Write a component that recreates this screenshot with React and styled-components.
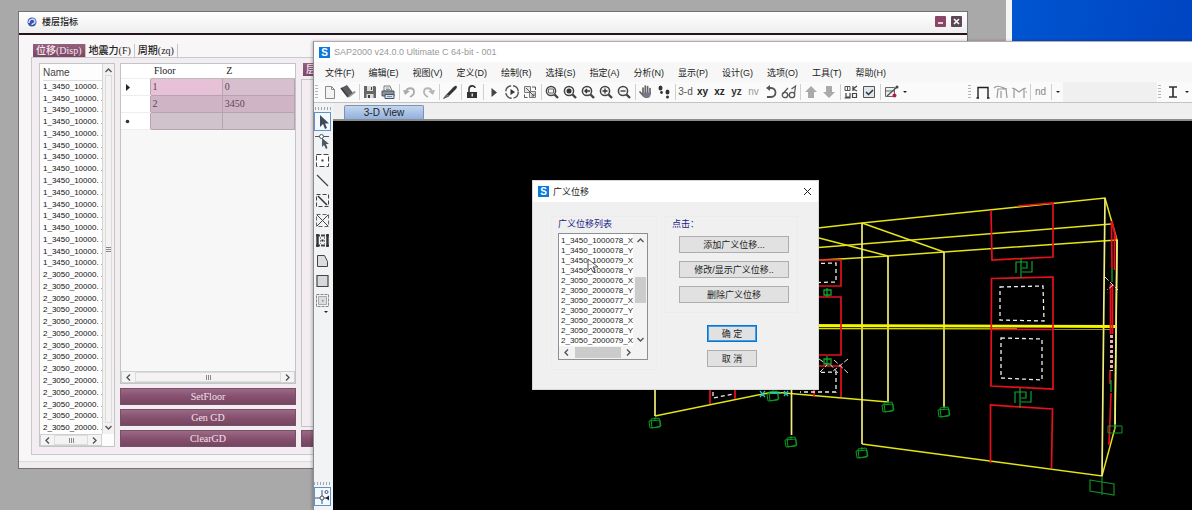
import React from 'react';
import styled, { createGlobalStyle, css } from 'styled-components';

const upperNames = Array(16).fill('1_3450_10000. .');
const lowerNames = Array(14).fill('2_3050_20000. .');
const names = [...upperNames, ...lowerNames];

const displacements = [
  '1_3450_1000078_X',
  '1_3450_1000078_Y',
  '1_3450_1000079_X',
  '1_3450_1000078_Y',
  '2_3050_2000076_X',
  '2_3050_2000078_Y',
  '2_3050_2000077_X',
  '2_3050_2000077_Y',
  '2_3050_2000078_X',
  '2_3050_2000078_Y',
  '2_3050_2000079_X',
];

const menus = [
  '文件(F)', '编辑(E)', '视图(V)', '定义(D)', '绘制(R)', '选择(S)', '指定(A)',
  '分析(N)', '显示(P)', '设计(G)', '选项(O)', '工具(T)', '帮助(H)',
];

// Toolbar groups, a separator is drawn between two groups
const mainTools = [
  ['new', 'tag'],
  ['save', 'print'],
  ['undo', 'redo'],
  ['pen'],
  ['lock'],
  ['play', 'run', 'stages'],
  ['zoomBox', 'zoomAll', 'zoomPrev', 'zoomIn', 'zoomOut'],
  ['hand', 'feet'],
  ['3-d', 'xy', 'xz', 'yz', 'nv', 'rotate', 'glasses'],
  ['up', 'down'],
  ['objects', 'check'],
  ['assign'],
];

const textTools = {
  '3-d': '#555', xy: '#222', xz: '#222', yz: '#333', nv: '#999', nd: '#888',
};

const sideTools = [
  'pointer', 'reshape', 'joint', 'frame', 'quickFrame', 'brace',
  'secondary', 'poly', 'rect', 'quickArea',
];

const glass = (inner) => (
  <>
    <circle cx="7" cy="7" r="4.6" fill="#f4f4f4" stroke="#444" strokeWidth="1.5" />
    <path d="M10.5 10.5 14 14" stroke="#444" strokeWidth="2.4" />
    {inner}
  </>
);

const icons = {
  new: <path d="M3.5 2.5h6l3 3v9h-9zM9.5 2.5v3h3" fill="#f4f4f2" stroke="#8a8a8a" />,
  tag: (
    <>
      <path d="M1 4 7 1l6 8-5 4z" fill="#5c5c60" />
      <path d="M8 14l2-1 6-5-2-1z" fill="#8f9094" />
      <path d="M1 4l7 9" stroke="#3c3c40" strokeWidth="1.6" />
    </>
  ),
  save: (
    <>
      <path d="M2 2h11l1 1v11H2z" fill="#666" />
      <path d="M5 2h6v5H5zM4.500 10h7v4h-7z" fill="#ddd" />
      <path d="M9 3h1v3H9zM6 11h2v3H6z" fill="#444" />
    </>
  ),
  print: (
    <>
      <path d="M4 7 4 2h6l2 5z" fill="#fff" stroke="#777" />
      <path d="M2 7h12v5H2z" fill="#8a9098" stroke="#556" />
      <path d="M5 10.500h9v4H5z" fill="#d4e0ee" stroke="#456" />
      <path d="M5.500 4h4M6 5.500h4M7 12.500h5" stroke="#678" strokeWidth=".8" />
    </>
  ),
  undo: (
    <>
      <path d="M4 8c1-5 8-5 8 0 0 3-2 4-4 5" fill="none" stroke="#aaa" strokeWidth="1.8" />
      <path d="M1 6l7 1-5 4z" fill="#aaa" />
    </>
  ),
  redo: (
    <>
      <path d="M12 8c-1-5-8-5-8 0 0 3 2 4 4 5" fill="none" stroke="#b5b5b5" strokeWidth="1.8" />
      <path d="M15 6l-7 1 5 4z" fill="#b5b5b5" />
    </>
  ),
  pen: (
    <>
      <path d="M14.500 2c1 1 0 2.500-1 3.500L7 12l-2.500-1.500L11 3.500c1-1 2.500-2.500 3.500-1.500z" fill="#333" />
      <path d="M4.500 10.500 1.500 14.500 7 12" fill="#777" stroke="#444" strokeWidth=".8" />
    </>
  ),
  lock: (
    <>
      <path d="M5 8V5c0-4 6-4 6-1" fill="none" stroke="#333" strokeWidth="1.6" />
      <path d="M3 8h10v6H3z" fill="#333" />
      <path d="M7.500 9.500h1.500v3H7.500z" fill="#ddd" />
    </>
  ),
  play: <path d="M5.500 4 11 8.500 5.500 13z" fill="#444" />,
  run: (
    <>
      <circle cx="8" cy="8" r="6.300" fill="none" stroke="#555" strokeWidth="1.400" strokeDasharray="8 2" />
      <path d="M6.500 5 11 8l-4.500 3z" fill="#333" />
    </>
  ),
  stages: (
    <>
      <path d="M2.500 2.500h6v6h-6zM7.500 7.500h6v6h-6z" fill="#e4e4e4" stroke="#777" />
      <path d="M4 4l8 8M9.500 12H12V9.500M10 3h3.500v3M2.500 10.500v3h3" fill="none" stroke="#555" />
    </>
  ),
  zoomBox: glass(<path d="M4.500 5h5v4h-5z" stroke="#666" fill="none" />),
  zoomAll: glass(<circle cx="7" cy="7" r="2.500" fill="#333" />),
  zoomPrev: glass(<path d="M10 7H5M7 5 5 7l2 2" stroke="#333" fill="none" strokeWidth="1.400" />),
  zoomIn: glass(<path d="M4.500 7h5M7 4.500v5" stroke="#333" strokeWidth="1.300" />),
  zoomOut: glass(<path d="M4.500 7h5" stroke="#333" strokeWidth="1.300" />),
  hand: (
    <>
      <path d="M5 10V4M7.300 9V2M9.600 9V2.500M12 10V4.500M5.500 12 2 8" stroke="#666" strokeWidth="1.700" strokeLinecap="round" />
      <path d="M4.500 8.500h8.300c0 3-1 5.500-3 5.500H7.500c-1.500 0-3-2-3-5.500z" fill="#778" />
    </>
  ),
  feet: (
    <>
      <ellipse cx="4.500" cy="4" rx="2" ry="2.600" fill="#333" />
      <circle cx="5.500" cy="8.500" r="1.400" fill="#333" />
      <ellipse cx="11.500" cy="8" rx="2" ry="2.600" fill="#333" />
      <circle cx="11.500" cy="13" r="1.500" fill="#333" />
    </>
  ),
  rotate: (
    <>
      <path d="M5 4h3c6 0 6 9 0 9H4" fill="none" stroke="#555" strokeWidth="1.800" />
      <path d="M7 1v6L3 4z" fill="#555" />
    </>
  ),
  glasses: (
    <>
      <circle cx="4" cy="11" r="2.700" fill="none" stroke="#555" strokeWidth="1.300" />
      <circle cx="11" cy="11" r="2.700" fill="none" stroke="#555" strokeWidth="1.300" />
      <path d="M1.500 10 7 4M13.500 10l1-8-4 3M6.500 11h2" fill="none" stroke="#555" strokeWidth="1.200" />
    </>
  ),
  up: <path d="M8 2l6 6h-3v6H5V8H2z" fill="#aaa" />,
  down: <path d="M8 14 2 8h3V2h6v6h3z" fill="#aaa" />,
  objects: (
    <>
      <path d="M2 2.500h5v4H2zM4.500 2v5" fill="none" stroke="#555" />
      <path d="M10 2v5M14 2l-4 3 4 2M3 9v4h4V9M9.500 9.500h4v4h-4zM1.500 14h6" fill="none" stroke="#444" strokeWidth="1.200" />
    </>
  ),
  check: (
    <>
      <path d="M2.500 2.500h11v11h-11z" fill="#dde7f0" stroke="#555" />
      <path d="M5 8l2.500 2.500L12 6" fill="none" stroke="#333" strokeWidth="1.500" />
    </>
  ),
  assign: (
    <>
      <path d="M2.500 3.500h9v9h-9zM2.500 7h9" fill="#eee" stroke="#666" />
      <path d="M4 12 14 3" stroke="#555" strokeWidth="1.300" />
      <circle cx="14" cy="3" r="1.500" fill="#445" />
      <circle cx="11.500" cy="11.500" r="2" fill="#b02040" />
    </>
  ),
  portal: <path d="M3 14V3.500h10V14M1.500 14H4M12 14h2.500" fill="none" stroke="#222" strokeWidth="1.400" />,
  portalBent: <path d="M4 14 5 5h8l1 9M1 4c4-4 8 0 13 1M8 14V7" fill="none" stroke="#999" strokeWidth="1.200" />,
  portalLoad: <path d="M3 14V4M13 14V4M1 4l3 1 4 3 4-3 3-1M14.500 8h1.500" fill="none" stroke="#999" strokeWidth="1.200" />,
  iBeam: <path d="M4 3h8M4 13h8M8 3v10" stroke="#333" strokeWidth="1.700" />,
  pointer: <path d="M5 1v12l3-3 2 5 2-1-2-4.500h4z" fill="#3f4b5a" />,
  reshape: (
    <>
      <path d="M0 3.500h14" stroke="#555" />
      <circle cx="6.500" cy="3.500" r="2" fill="#fff" stroke="#456" />
      <path d="M7 5v9l2-2 2 4 1.500-1L11 11h3z" fill="#4c5866" />
    </>
  ),
  joint: (
    <>
      <path d="M1.500 1.500h12v12h-12z" fill="#fff" stroke="#444" strokeDasharray="5 2" />
      <path d="M6.500 6.500h2v2h-2z" fill="#333" />
    </>
  ),
  frame: <path d="M2 2l11 11" stroke="#444" strokeWidth="1.300" />,
  quickFrame: (
    <>
      <path d="M1.500 1.500h12v12h-12z" fill="none" stroke="#444" strokeDasharray="4 2" />
      <path d="M3 3l9 9" stroke="#333" strokeWidth="1.500" />
    </>
  ),
  brace: (
    <>
      <path d="M1.500 1.500h12v12h-12z" fill="none" stroke="#666" strokeDasharray="4 2" />
      <path d="M2 2l11 11M13 2 2 13" stroke="#444" />
    </>
  ),
  secondary: (
    <>
      <path d="M1 2.500h13M1 12.500h13" stroke="#444" strokeWidth="2" strokeDasharray="4 1" />
      <path d="M2.500 1v13M12.500 1v13" stroke="#333" strokeWidth="2.400" />
      <path d="M5.500 4v7M9.500 4v7" stroke="#888" strokeDasharray="2 1" />
      <path d="M6.500 6.500h2v2h-2z" fill="#222" />
    </>
  ),
  poly: <path d="M2.500 2.500h7l3 6v5h-10z" fill="#ddd" stroke="#444" />,
  rect: <path d="M2 2.500h11v11H2z" fill="#d5d9dd" stroke="#444" strokeWidth="1.200" />,
  quickArea: (
    <>
      <path d="M1.500 1.500h12v12h-12z" fill="none" stroke="#888" strokeDasharray="3 1" />
      <path d="M3.500 3.500h8v8h-8z" fill="#ddd" stroke="#aaa" />
      <path d="M7 7h1.500v1.500H7z" fill="#888" />
    </>
  ),
  snap: (
    <>
      <path d="M0 9h14M7 1v14" stroke="#456" />
      <circle cx="7" cy="9" r="2" fill="#fff" stroke="#456" />
      <path d="M14 6.500v5L10.500 9z" fill="#223" />
      <circle cx="11.500" cy="3" r="1.500" fill="none" stroke="#456" />
    </>
  ),
};

const Icon = ({ name }) => (
  <svg width="16" height="16" viewBox="0 0 16 16" aria-hidden="true">{icons[name]}</svg>
);

const Tool = ({ name }) => (
  <ToolButton type="button" aria-label={name} $text={name in textTools} $color={textTools[name]}>
    {name in textTools ? name : <Icon name={name} />}
  </ToolButton>
);

const Chevron = ({ to }) => {
  const turn = { up: 0, right: 90, down: 180, left: 270 }[to];
  return (
    <svg width="9" height="9" viewBox="0 0 9 9" aria-hidden="true">
      <path d="M1.500 6 4.500 3l3 3" fill="none" stroke="#555" strokeWidth="1.400" transform={`rotate(${turn} 4.5 4.5)`} />
    </svg>
  );
};

const FloorWindow = () => (
  <FloorFrame>
    <FloorTitle>
      <svg width="10" height="10" viewBox="0 0 10 10" aria-hidden="true">
        <circle cx="5" cy="5" r="4.500" fill="#3b55a8" />
        <path d="M2 6c0-5 6-5 6-1 0 2-3 1-3 3" fill="none" stroke="#d5e2ff" strokeWidth="1.500" />
      </svg>
      <h1>楼层指标</h1>
      <CaptionButton type="button" aria-label="最小化">
        <svg width="7" height="7" viewBox="0 0 7 7"><path d="M1 5h5" stroke="#fff" strokeWidth="1.500" /></svg>
      </CaptionButton>
      <CaptionButton type="button" aria-label="关闭" $dark>
        <svg width="7" height="7" viewBox="0 0 7 7"><path d="M1 1l5 5M6 1 1 6" stroke="#fff" strokeWidth="1.500" /></svg>
      </CaptionButton>
    </FloorTitle>
    <FloorBody>
      <Tabs>
        <Tab type="button" $active>位移(Disp)</Tab>
        <Tab type="button">地震力(F)</Tab>
        <Tab type="button">周期(zq)</Tab>
      </Tabs>
      <TabPanel>
        <NamePanel>
          <NameColumn>
            <NameHeader>Name</NameHeader>
            <NameList>
              {names.map((name, i) => <li key={i}>{name}</li>)}
            </NameList>
          </NameColumn>
          <VerticalBar>
            <Chevron to="up" />
            <Thumb><Grip $vertical /></Thumb>
            <Chevron to="down" />
          </VerticalBar>
          <HorizontalBar>
            <Chevron to="left" />
            <Thumb><Grip /></Thumb>
            <Chevron to="right" />
          </HorizontalBar>
        </NamePanel>
        <FloorColumn>
          <GridPanel>
            <FloorTable>
              <thead>
                <tr><th aria-label="row" /><th>Floor</th><th>Z</th></tr>
              </thead>
              <tbody>
                <tr>
                  <th><svg width="5" height="7" viewBox="0 0 5 7"><path d="M1 0l4 3.500L1 7z" fill="#222" /></svg></th>
                  <Cell $color="#e7c1d8">1</Cell><Cell $color="#d7bfd0">0</Cell>
                </tr>
                <tr><th /><Cell $color="#cfb4c6">2</Cell><Cell $color="#cfb4c6">3450</Cell></tr>
                <tr>
                  <th><svg width="5" height="5" viewBox="0 0 5 5"><circle cx="2.500" cy="2.500" r="1.800" fill="#333" /></svg></th>
                  <Cell $color="#d1c3cc" /><Cell $color="#d1c3cc" />
                </tr>
              </tbody>
            </FloorTable>
            <HorizontalBar>
              <Chevron to="left" />
              <Thumb><Grip /></Thumb>
              <Chevron to="right" />
            </HorizontalBar>
          </GridPanel>
          <PlumButton type="button">SetFloor</PlumButton>
          <PlumButton type="button">Gen GD</PlumButton>
          <PlumButton type="button">ClearGD</PlumButton>
        </FloorColumn>
        <ResultColumn>
          <Tabs><Tab type="button" $active>层</Tab></Tabs>
          <ResultPanel />
          <PlumButton type="button" aria-label="计算" />
        </ResultColumn>
      </TabPanel>
    </FloorBody>
    <FloorStatus />
  </FloorFrame>
);

// One restraint symbol at the foot of a column
const Support = ({ x, y }) => (
  <path
    d={`M${x - 4} ${y - 4}l8-1 2 8-9 2zM${x - 6} ${y - 2}l11-1v7l-10 1zM${x} ${y - 6}v3`}
    stroke="#0a9a22"
  />
);

const Hinge = ({ x, y }) => (
  <path
    d={`M${x} ${y - 10}v20M${x - 5} ${y + 5}v-11h11v6h-5M${x + 11} ${y - 7}v11h-10`}
    stroke="#12a52c"
    strokeWidth="1.200"
  />
);

const Model = () => (
  <svg width="100%" height="100%" viewBox="333 121 859 389" preserveAspectRatio="xMinYMin meet" fill="none" role="img" aria-label="3-D View">
    <g stroke="#e4e416" strokeWidth="1.500">
      <path d="M800 230 862 223 1105 198 1117 240 1115 428 1102 476 862 444" />
      <path d="M800 249 1111 224M800 261l40-2 48-3 56-4 173-12" />
      <path d="M800 233l88 23M862 223l82 29" />
      <path d="M655 416l118-24 115 10" />
    </g>
    <g stroke="#eeee7c" strokeWidth="1.700">
      <path d="M862 223v221M888 256v146M944 252v156M1105 198l-3 278M655 380v36M791.500 380v55" />
      <path d="M1117 240l-2 188" />
    </g>
    <path d="M800 325.500l315 1" stroke="#f6f600" strokeWidth="2.800" />
    <path d="M800 328.500l310 .5" stroke="#d8d800" strokeWidth="1.400" />
    <g stroke="#e8101c" strokeWidth="1.700">
      <path d="M1018 206l35-3v54l-61 3-1-50" />
      <path d="M991.500 278.500 1053 277v112l-62-3zM991 329.500h62" />
      <path d="M990.500 463v-58l62 4-1 59" />
      <path d="M800 260h41v26h-41M800 297h41v58h-41M800 366h41v31M814 366v31M710 380v24M735 380v19" />
      <path d="M1111.500 221l.5 47M1112 221l4 18M1114.500 232v38M1110.500 284v50M1112.500 284v50M1110 370v14M1111 393l-2 52" />
    </g>
    <g stroke="#eee" strokeWidth="1.300" strokeDasharray="4 3">
      <path d="M1000 287l43-1 1 35-44-1zM1001 338l41 1v41l-41-2z" />
      <path d="M800 264l36-1v19l-36 1M800 373l36-1v20h-36M713 385v13l20-4" />
    </g>
    <path d="M1111.500 335v36" stroke="#f0b0b0" strokeWidth="3" strokeDasharray="3 2" />
    <path d="M1105 277l13 13M1113 285l-6 5M834 360l14 13M848 359l-16 13M820 372l9-9 9 10M819 359l9 6" stroke="#ddd" strokeDasharray="5 2" />
    <Support x={655} y={423} />
    <Support x={791} y={442} />
    <Support x={773} y={396} />
    <Support x={888} y={407} />
    <Support x={944} y={412} />
    <Support x={862} y={453} />
    <path d="M1108 426h14v7h-14zM1115 424v6" stroke="#0a9a22" />
    <Hinge x={1021} y={268} />
    <Hinge x={1020} y={398} />
    <path d="M827 288v9M824 290h7v5h-7zM827 356v9M824 359h7v5h-7zM1112 268v14M1111 380v12" stroke="#12a52c" strokeWidth="1.300" />
    <path d="M1090 480l24 4v11l-24-4zM1102 477v18" stroke="#0f8e24" strokeWidth="1.200" />
    <path d="M760 391l5 6M765 391l-5 6M770 393h11M784 391l4 5M788 391l-4 5" stroke="#20c8c8" strokeWidth="1.300" />
  </svg>
);

const SapWindow = () => (
  <SapFrame>
    <SapTitle><Logo>S</Logo><span>SAP2000 v24.0.0 Ultimate C 64-bit - 001</span></SapTitle>
    <MenuBar>
      {menus.map((menu) => <button type="button" key={menu}>{menu}</button>)}
    </MenuBar>
    <ToolBars>
      <ToolBar $grow>
        <DotGrip />
        {mainTools.map((group, i) => (
          <ToolGroup key={i}>
            {group.map((name) => <Tool key={name} name={name} />)}
          </ToolGroup>
        ))}
        <Caret />
      </ToolBar>
      <ToolBar>
        <DotGrip />
        <ToolGroup>
          <Tool name="portal" />
          <Tool name="portalBent" />
          <Tool name="portalLoad" />
        </ToolGroup>
        <ToolGroup>
          <Tool name="nd" />
        </ToolGroup>
        <ToolGroup><Caret /></ToolGroup>
      </ToolBar>
      <ToolBar $last>
        <DotGrip />
        <Tool name="iBeam" />
        <Caret />
      </ToolBar>
    </ToolBars>
    <Workspace>
      <SideBar>
        <RowGrip />
        {sideTools.map((name) => (
          <SideButton type="button" key={name} aria-label={name} $active={name === 'pointer'}>
            <Icon name={name} />
          </SideButton>
        ))}
        <Caret />
        <SideFoot>
          <RowGrip />
          <SideButton type="button" aria-label="snap" $active><Icon name="snap" /></SideButton>
        </SideFoot>
      </SideBar>
      <ViewArea>
        <ViewTabs><ViewTab type="button">3-D View</ViewTab></ViewTabs>
        <Canvas><Model /></Canvas>
      </ViewArea>
    </Workspace>
  </SapFrame>
);

const DisplacementDialog = () => (
  <DialogFrame role="dialog" aria-label="广义位移">
    <DialogTitle>
      <Logo>S</Logo>
      <h2>广义位移</h2>
      <button type="button" aria-label="关闭">
        <svg width="9" height="9" viewBox="0 0 9 9"><path d="M1 1l7 7M8 1 1 8" stroke="#222" /></svg>
      </button>
    </DialogTitle>
    <DialogBody>
      <Group>
        <GroupLabel id="displacements">广义位移列表</GroupLabel>
        <ListBox>
          <ListItems role="listbox" aria-labelledby="displacements">
            {displacements.map((item, i) => <li role="option" aria-selected="false" key={i}>{item}</li>)}
          </ListItems>
          <ListBar>
            <Chevron to="up" />
            <ListThumb />
            <Chevron to="down" />
          </ListBar>
          <ListFoot>
            <Chevron to="left" />
            <ListThumb $flat />
            <Chevron to="right" />
          </ListFoot>
          <Cursor width="13" height="16" viewBox="0 0 13 16" aria-hidden="true">
            <path d="M1 1v12l3-3 2 4 2-1-2-4h5z" fill="#fff" fillOpacity=".5" stroke="#555" />
          </Cursor>
        </ListBox>
      </Group>
      <ActionColumn>
        <Group>
          <GroupLabel>点击：</GroupLabel>
          <ActionList>
            <DialogButton type="button">添加广义位移...</DialogButton>
            <DialogButton type="button">修改/显示广义位移..</DialogButton>
            <DialogButton type="button">删除广义位移</DialogButton>
          </ActionList>
        </Group>
        <Confirm>
          <DialogButton type="button" $primary>确 定</DialogButton>
          <DialogButton type="button">取 消</DialogButton>
        </Confirm>
      </ActionColumn>
    </DialogBody>
  </DialogFrame>
);

const App = () => (
  <>
    <GlobalStyle />
    <Desktop>
      <Wallpaper />
      <FloorWindow />
      <SapWindow />
      <DisplacementDialog />
    </Desktop>
  </>
);

export default App;


const GlobalStyle = createGlobalStyle`
  * {
    box-sizing: border-box;
  }

  body {
    margin: 0;
    font-family: "Liberation Sans", "Noto Sans CJK SC", sans-serif;
    font-size: 9px;
    color: #222;
  }

  h1, h2, ul {
    margin: 0;
    padding: 0;
    font-size: 9px;
    font-weight: 400;
    list-style: none;
  }

  button {
    padding: 0;
    border: 0;
    background: none;
    color: inherit;
    font: inherit;
    white-space: nowrap;
  }

  svg {
    display: block;
    flex: none;
  }
`;

const Desktop = styled.main`
  position: relative;
  min-height: 100vh;
  overflow: hidden;
  background: #a9a9a9;
`;

const Wallpaper = styled.div`
  position: absolute;
  top: 0;
  left: 1006px;
  right: 0;
  height: 48px;
  border-left: 6px solid #f4f6f4;
  background: linear-gradient(100deg, #0055d0, #0044c2);
`;

const FloorFrame = styled.section`
  position: absolute;
  top: 11px;
  left: 18px;
  right: 224px;
  border: 1px solid #77707a;
  background: #f8f6f7;
`;

const FloorTitle = styled.header`
  display: flex;
  align-items: center;
  gap: 5px;
  height: 23px;
  padding: 0 5px 2px 8px;
  border-bottom: 2px solid #22131c;
  background: linear-gradient(#fff, #eeeeee);

  h1 {
    flex: 1;
    font-weight: 500;
  }
`;

const CaptionButton = styled.button`
  display: flex;
  align-items: center;
  justify-content: center;
  width: 11px;
  height: 11px;
  border-radius: 1px;
  background: ${({ $dark }) => ($dark ? '#5d4756' : '#8a4668')};
`;

const FloorBody = styled.div`
  padding: 9px 12px 6px;
`;

const FloorStatus = styled.footer`
  height: 7px;
  border-top: 1px solid #dcdadb;
  background: #efeded;
`;

const Tabs = styled.nav`
  display: flex;
  padding-left: 2px;
`;

const Tab = styled.button`
  height: 13px;
  padding: 0 3px 0 3px;
  border-right: 1px solid #c8c4c6;
  font: 500 10px/12px "Liberation Serif", "Noto Sans CJK SC", serif;

  ${({ $active }) => $active && css`
    background: linear-gradient(#94607c, #7c4563);
    color: #f6e6f0;
  `}
`;

const TabPanel = styled.div`
  display: flex;
  gap: 5px;
  padding: 5px 7px 7px;
  border: 1px solid #c3cccb;
  background: #f3edf1;
`;

const NamePanel = styled.div`
  display: grid;
  grid-template-columns: 1fr 12px;
  grid-template-rows: 1fr 12px;
  width: 76px;
  height: 384px;
  border: 1px solid #bfc6c6;
  background: #fdfdfd;
`;

const NameColumn = styled.div`
  display: flex;
  flex-direction: column;
  min-width: 0;
  overflow: hidden;
  padding-left: 3px;
`;

const NameHeader = styled.div`
  height: 17px;
  border-bottom: 1px solid #ddd;
  font-size: 10px;
  line-height: 18px;
  color: #444;
`;

const NameList = styled.ul`
  display: flex;
  flex: 1;
  flex-direction: column;

  li {
    display: flex;
    flex: 1;
    align-items: center;
    font-size: 8px;
    line-height: 8px;
    white-space: nowrap;
    color: #111;
  }
`;

const VerticalBar = styled.div`
  display: flex;
  flex-direction: column;
  align-items: center;
  padding: 2px 0;
  border-left: 1px solid #d5d5d5;
  background: #f1f1f1;
`;

const HorizontalBar = styled.div`
  display: flex;
  align-items: center;
  height: 12px;
  padding: 0 2px;
  border: 1px solid #d0d0d0;
  background: #f4f4f4;
`;

const Thumb = styled.div`
  display: flex;
  flex: 1;
  align-items: center;
  justify-content: center;
  align-self: stretch;
  margin: 0 2px;
  border: 1px solid #dcdcdc;
  background: #f4f2f3;
`;

const Grip = styled.span`
  width: ${({ $vertical }) => ($vertical ? '6px' : '5px')};
  height: 5px;
  background: repeating-linear-gradient(
    ${({ $vertical }) => ($vertical ? '180deg' : '90deg')},
    #888 0 1px, transparent 1px 2px
  );
`;

const FloorColumn = styled.div`
  display: flex;
  flex-direction: column;
  gap: 4px;
  width: 176px;
`;

const GridPanel = styled.div`
  display: flex;
  flex: 1;
  flex-direction: column;
  justify-content: space-between;
  border: 1px solid #bfc6c6;
  background: #f8f7f8;
`;

const FloorTable = styled.table`
  width: 100%;
  border-collapse: collapse;
  table-layout: fixed;
  font: 10px/14px "Liberation Serif", "Noto Sans CJK SC", serif;

  th {
    height: 17px;
    padding: 0 0 0 4px;
    border-bottom: 1px solid #bbb;
    background: #fff;
    font-weight: 500;
    text-align: left;
  }

  thead th {
    height: 14px;
  }

  th:first-child {
    width: 29px;
    border-color: #eee;
  }
`;

const Cell = styled.td`
  padding: 0 2px;
  border: 1px solid #b8a3b0;
  background: ${({ $color }) => $color};
  color: #5c4654;
`;

const PlumButton = styled.button`
  height: 17px;
  border: 1px solid #75506a;
  background: linear-gradient(#9a6a86, #87506f 50%, #75465f);
  color: #f2e2ec;
  font: 10px/14px "Liberation Serif", serif;
`;

const ResultColumn = styled.div`
  display: flex;
  flex: 1;
  flex-direction: column;
  gap: 3px;
`;

const ResultPanel = styled.div`
  flex: 1;
  border: 1px solid #bfc6c6;
`;

const SapFrame = styled.section`
  position: absolute;
  top: 41px;
  left: 313px;
  right: 0;
  bottom: 0;
  display: flex;
  flex-direction: column;
  border-top: 1px solid #b9a6b0;
  border-left: 1px solid #8c8c90;
  background: #f0f0f0;
  box-shadow: -1px 0 3px rgba(0, 0, 0, 0.25);
`;

const SapTitle = styled.header`
  display: flex;
  align-items: center;
  gap: 4px;
  height: 20px;
  padding-left: 5px;
  background: #fff;
  color: #999;
`;

const Logo = styled.span`
  width: 11px;
  height: 11px;
  background: #0a78dc;
  color: #fff;
  font-size: 10px;
  font-weight: 700;
  line-height: 11px;
  text-align: center;
`;

const MenuBar = styled.nav`
  display: flex;
  gap: 14px;
  height: 20px;
  padding-left: 11px;
  background: #f7f7f7;
`;

const ToolBars = styled.div`
  display: flex;
  height: 21px;
  overflow: hidden;
  border-bottom: 1px solid #c4c4c4;
  background: #f0f0f0;
`;

const ToolBar = styled.div`
  display: flex;
  align-items: center;
  padding-bottom: 1px;
  background: #fafafa;

  ${({ $grow }) => $grow && css`
    flex: 1;
  `}

  ${({ $last }) => $last && css`
    margin-left: 94px;
  `}
`;

const DotGrip = styled.span`
  width: 3px;
  height: 14px;
  margin: 0 3px 0 1px;
  background: repeating-linear-gradient(#b5b5b5 0 1px, transparent 1px 3px);
`;

const ToolGroup = styled.div`
  display: flex;
  align-items: center;
  min-height: 16px;

  & + & {
    margin-left: 2px;
    padding-left: 1px;
    border-left: 1px solid #cfcfcf;
  }
`;

const ToolButton = styled.button`
  display: flex;
  align-items: center;
  justify-content: center;
  width: ${({ $text }) => ($text ? '17px' : '18px')};
  height: 16px;
  color: ${({ $color }) => $color};
  font-size: 10px;
  font-weight: ${({ $color }) => ($color === '#222' || $color === '#333' ? 700 : 400)};
`;

const Caret = styled.span`
  width: 0;
  margin: 0 3px;
  border: 2px solid transparent;
  border-top-color: #222;
  border-bottom: 0;
`;

const Workspace = styled.div`
  display: flex;
  flex: 1;
  min-height: 0;
`;

const SideBar = styled.aside`
  display: flex;
  flex-direction: column;
  align-items: flex-end;
  width: 19px;
  padding-right: 2px;
  background: #f1f3f5;
`;

const RowGrip = styled.span`
  display: block;
  width: 16px;
  height: 3px;
  margin: 4px 0 2px;
  background: repeating-linear-gradient(90deg, #9aa6b4 0 1px, transparent 1px 3px);
`;

const SideButton = styled.button`
  display: flex;
  align-items: center;
  justify-content: center;
  width: 17px;
  height: 20px;
  border: 1px solid transparent;

  ${({ $active }) => $active && css`
    height: 19px;
    border-color: #5f92c8;
    background: #f3f9ff;
  `}
`;

const SideFoot = styled.div`
  margin-top: auto;
  padding-bottom: 4px;
`;

const ViewArea = styled.div`
  display: flex;
  flex: 1;
  flex-direction: column;
  min-width: 0;
`;

const ViewTabs = styled.nav`
  display: flex;
  align-items: flex-end;
  height: 18px;
  padding-left: 11px;
  border-bottom: 2px solid #8c8c8c;
  background: #efefef;
`;

const ViewTab = styled.button`
  width: 80px;
  height: 14px;
  border: 1px solid #7c93b4;
  border-bottom: 0;
  border-radius: 2px 2px 0 0;
  background: linear-gradient(#c4d6ef, #8fb0de);
  font-size: 10px;
  line-height: 13px;
`;

const Canvas = styled.div`
  flex: 1;
  min-height: 0;
  background: #000;
`;

const DialogFrame = styled.section`
  position: absolute;
  top: 180px;
  left: 532px;
  width: 287px;
  border: 1px solid #d8d8d8;
  background: #f0f0f0;
`;

const DialogTitle = styled.header`
  display: flex;
  align-items: center;
  gap: 4px;
  height: 21px;
  padding: 0 6px 0 5px;
  background: #fff;

  h2 {
    flex: 1;
  }
`;

const DialogBody = styled.div`
  display: flex;
  gap: 8px;
  padding: 14px 20px 19px 18px;
`;

const Group = styled.div`
  padding: 0 8px 9px 6px;
  border: 1px solid #ececec;
`;

const GroupLabel = styled.div`
  height: 16px;
  color: #201c8c;
  line-height: 14px;
`;

const ListBox = styled.div`
  position: relative;
  display: grid;
  grid-template-columns: 1fr 14px;
  grid-template-rows: 1fr 13px;
  width: 90px;
  height: 127px;
  border: 1px solid #8a8f98;
  background: #fff;
`;

const ListItems = styled.ul`
  display: flex;
  flex-direction: column;
  min-width: 0;
  overflow: hidden;
  padding: 2px 0 0 2px;

  li {
    display: flex;
    flex: 1;
    align-items: center;
    font-size: 8px;
    line-height: 8px;
    white-space: nowrap;
  }
`;

const ListBar = styled.div`
  display: flex;
  flex-direction: column;
  align-items: center;
  justify-content: space-between;
  padding: 2px 0;
  background: #f3f3f3;
`;

const ListThumb = styled.span`
  width: ${({ $flat }) => ($flat ? '46px' : '11px')};
  height: ${({ $flat }) => ($flat ? '11px' : '26px')};
  background: #cbcbcb;
`;

const ListFoot = styled.div`
  display: flex;
  grid-column: 1 / -1;
  align-items: center;
  justify-content: space-between;
  padding: 0 14px 0 3px;
  background: #f3f3f3;
`;

const Cursor = styled.svg`
  position: absolute;
  top: 24px;
  left: 28px;
`;

const ActionColumn = styled.div`
  display: flex;
  flex: 1;
  flex-direction: column;
  gap: 12px;
`;

const ActionList = styled.div`
  display: flex;
  flex-direction: column;
  gap: 8px;
  padding: 3px 0 0 7px;
`;

const DialogButton = styled.button`
  height: 17px;
  border: 1px solid ${({ $primary }) => ($primary ? '#0078d7' : '#adadad')};
  outline: ${({ $primary }) => ($primary ? '1px solid #4a9ae0' : 'none')};
  outline-offset: -2px;
  background: #e1e1e1;
  line-height: 14px;
`;

const Confirm = styled.div`
  display: flex;
  flex-direction: column;
  gap: 8px;
  width: 50px;
  margin-left: 42px;
`;
